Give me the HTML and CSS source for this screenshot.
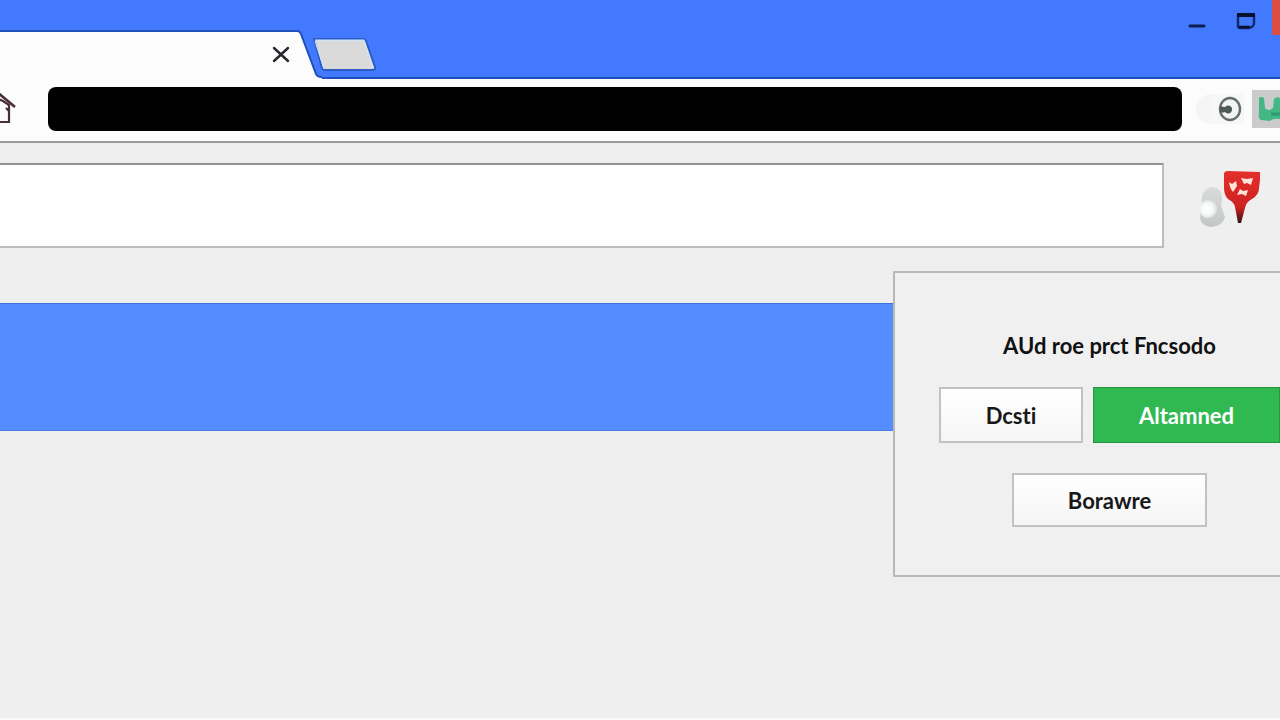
FILE: index.html
```html
<!DOCTYPE html>
<html lang="en">
<head>
<meta charset="utf-8">
<title>Browser window</title>
<link rel="stylesheet" href="styles.css">
</head>
<body>
<header class="titlebar">
  <div class="tab">
    <svg class="tab-shape" width="322" height="50" viewBox="0 0 322 50" aria-hidden="true">
      <path d="M0 1H297Q300 1 301 4L316 44Q317 47 322 47V50H0Z" fill="#fcfcfd"/>
      <path d="M0 1H297Q300 1 301 4L316 44Q317 47 322 47" fill="none" stroke="#1f4fb8" stroke-width="2"/>
    </svg>
    <button class="tab-close" aria-label="Close tab">
      <svg width="18" height="18" viewBox="0 0 18 18"><path d="M2 3L16 16M16 3L2 16" stroke="#26272a" stroke-width="2.4" stroke-linecap="round"/></svg>
    </button>
  </div>
  <button class="new-tab" aria-label="New tab">
    <svg width="64" height="34" viewBox="0 0 64 34"><path d="M2 1H51Q53 1 54 3L63 29Q64 32 60 32H13Q11 32 10 30Z" fill="#dadada" stroke="#2c5cc4" stroke-width="2"/><path d="M3 3L12 31M3 2H52L61 30" fill="none" stroke="#c9ecff" stroke-width="1"/></svg>
  </button>
  <div class="window-controls">
    <button class="minimize" aria-label="Minimize"><svg width="18" height="6" viewBox="0 0 18 6"><path d="M2 3H16" stroke="#0c1f50" stroke-width="3" stroke-linecap="round"/></svg></button>
    <button class="maximize" aria-label="Maximize"><svg width="20" height="18" viewBox="0 0 20 18"><path d="M2 3V14Q2 16 5 16H13Q18 15 18 11V3" fill="none" stroke="#11296a" stroke-width="2.4"/><path d="M3 15H14" stroke="#07112f" stroke-width="2.5"/><path d="M1 3H19" stroke="#07112f" stroke-width="4"/></svg></button>
    <button class="close-window" aria-label="Close window"></button>
  </div>
</header>
<nav class="toolbar">
  <button class="home" aria-label="Home"><svg width="18" height="34" viewBox="0 0 18 34"><path d="M-3 0L15 15" fill="none" stroke="#493036" stroke-width="2.6"/><path d="M-2 7L3 9L9 13V30H-1M6 16L9 19" fill="none" stroke="#493036" stroke-width="2.2"/></svg></button>
  <input class="address" type="text" aria-label="Address">
  <button class="extension" aria-label="Extension"><svg width="48" height="42" viewBox="0 0 48 42"><ellipse cx="16" cy="21" rx="16" ry="15" fill="#f5f5f5"/><rect x="16" y="6" width="32" height="30" fill="#f7f7f7"/><ellipse cx="34" cy="21" rx="10" ry="11" fill="#f3f5f4" stroke="#65706c" stroke-width="2.4"/><path d="M24 18Q27 19 29 19A4 4 0 1 1 29 24Q27 25 24 24Z" fill="#4d5a56"/></svg></button>
  <button class="shelf" aria-label="Saved items"><svg width="28" height="38" viewBox="0 0 28 38"><path d="M7 8Q9 6 12 8L13 18Q16 22 21 18L22 9Q25 6 28 8V29Q21 28 18 31L9 30Q6 29 7 22Z" fill="#43b884"/><path d="M19 24H28" stroke="#2d9b70" stroke-width="3"/></svg></button>
</nav>
<main class="page">
  <div class="search-row">
    <input class="search" type="text" aria-label="Search">
    <svg class="pin" width="66" height="60" viewBox="0 0 66 60" role="img" aria-label="Pin">
      <defs><linearGradient id="red" x2="0" y2="1"><stop offset="0" stop-color="#e52f2b"/><stop offset=".7" stop-color="#ce2221"/><stop offset="1" stop-color="#351012"/></linearGradient>
      <linearGradient id="grey" x2="0" y2="1"><stop offset="0" stop-color="#dadbdb"/><stop offset="1" stop-color="#c2c7c6"/></linearGradient>
      <radialGradient id="pearl" cx=".45" cy=".5"><stop offset="0" stop-color="#fff"/><stop offset=".6" stop-color="#f7f8f8"/><stop offset="1" stop-color="#e3e5e5"/></radialGradient></defs>
      <path d="M8 28Q11 19 19 19Q27 20 28 29L27 38L31 49Q29 58 17 59Q7 58 6 50Z" fill="url(#grey)"/><ellipse cx="14" cy="41" rx="9" ry="9" fill="url(#pearl)"/>
      <path d="M30 5Q31 3 34 3L67 4L65 20Q65 27 58 31Q52 34 51 40L47 55H44L41 39Q40 34 34 31Q30 27 30 20Z" fill="url(#red)"/>
      <path d="M35 14L38 16L42 13L43 18L39 24Q36 21 35 14M47 10L53 11L59 10L57 17L53 15L50 16M43 27L46 21L49 23L54 22L52 28L48 26Z" fill="#ffe4d7"/>
    </svg>
  </div>
  <div class="banner"></div>
</main>
<section class="popup" aria-labelledby="popup-title">
  <h1 id="popup-title">AUd roe prct Fncsodo</h1>
  <div class="choices">
    <button class="btn">Dcsti</button>
    <button class="btn primary">Altamned</button>
  </div>
  <button class="btn wide">Borawre</button>
</section>
</body>
</html>
```

FILE: styles.css
```css
* { box-sizing: border-box; }
body {
  margin: 0;
  min-height: 100vh;
  display: flex;
  flex-direction: column;
  position: relative;
  overflow: hidden;
  background: #efefef;
  font-family: Lato, "Noto Sans", sans-serif;
  font-variant-ligatures: none;
}
button { padding: 0; border: 0; background: none; font: inherit; }
svg { display: block; }
.titlebar {
  height: 79px;
  display: flex;
  align-items: flex-end;
  background: #4279ff;
  border-bottom: 2px solid #1f4fb8;
}
.tab {
  position: relative;
  width: 322px;
  height: 47px;
  display: flex;
  align-items: center;
  justify-content: flex-end;
  padding-right: 32px;
}
.tab-shape { position: absolute; top: 0; left: 0; }
.tab-close { position: relative; }
.new-tab { margin: 0 0 5px -10px; }
.window-controls {
  margin-left: auto;
  align-self: flex-start;
  display: flex;
  align-items: flex-start;
}
.minimize { padding: 23px 30px 0 0; }
.maximize { padding: 12px 16px 0 0; }
.close-window { width: 8px; height: 35px; background: #dc4e43; }
.toolbar {
  height: 64px;
  display: flex;
  align-items: center;
  background: #fcfcfd;
  border-bottom: 2px solid #9b9b9b;
  padding-bottom: 2px;
}
.home { width: 48px; }
.address {
  flex: 1;
  min-width: 0;
  height: 44px;
  border: 0;
  border-radius: 8px;
  background: #000;
  color: #fff;
  padding: 0 12px;
}
.extension { margin-left: 14px; }
.shelf { margin-left: 8px; background: #cbcbcb; }
.page { flex: 1; padding-top: 20px; border-bottom: 2px solid #fafafa; }
.search-row { display: flex; align-items: flex-start; }
.search {
  flex: 1;
  min-width: 0;
  height: 85px;
  background: #fff;
  border: 2px solid #bcbcbc;
  border-top-color: #929292;
  border-left: 0;
  padding: 0 16px;
}
.pin { margin: 5px 20px 0 30px; }
.banner {
  height: 128px;
  margin-top: 55px;
  background: #558cff;
  border-top: 1px solid #3e73dc;
  border-bottom: 1px solid #467bea;
}
.popup {
  position: absolute;
  top: 271px;
  right: 0;
  width: 387px;
  display: flex;
  flex-direction: column;
  align-items: center;
  padding: 58px 0 48px 44px;
  background: #f0f0f0;
  border: 2px solid #b9b9b9;
  border-right: 0;
}
.popup h1 {
  margin: 0;
  font-size: 22px;
  line-height: 30px;
  font-weight: 700;
  color: #111;
  white-space: nowrap;
}
.choices { align-self: stretch; display: flex; gap: 10px; margin-top: 26px; }
.btn {
  width: 144px;
  height: 56px;
  border: 2px solid #c2c2c2;
  background: linear-gradient(#fff, #f5f5f5);
  font-size: 22px;
  font-weight: 700;
  color: #181818;
}
.primary {
  flex: 1;
  background: #2fb950;
  border: 1px solid #249642;
  color: #fff;
}
.wide { width: 195px; height: 54px; margin-top: 30px; }
```
